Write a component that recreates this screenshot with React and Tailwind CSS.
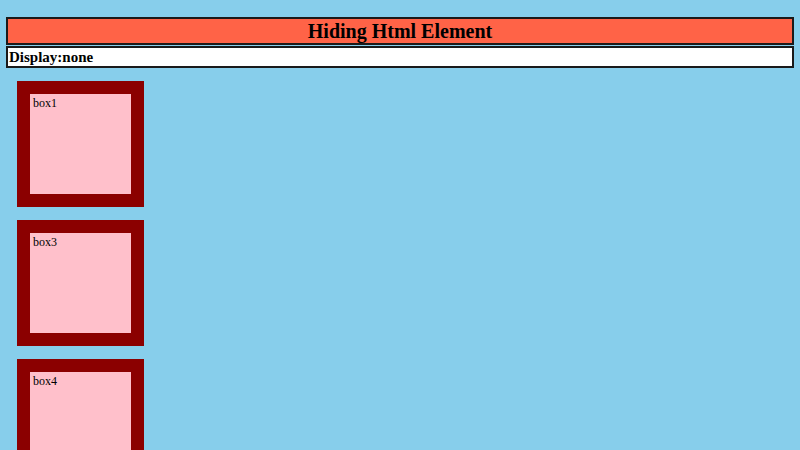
import React from 'react';

const boxes = ['box1', 'box3', 'box4'];

const Box = ({ label }) => (
  <div className="w-[127px] h-[126px] border-[13px] border-[#8b0000] bg-[#ffc0cb] px-[3px] py-[2px] text-[12px] leading-[14px] text-black">
    {label}
  </div>
);

export default function App() {
  return (
    <div className="min-h-[450px] bg-[#87ceeb] pt-[17px] px-[6px] font-['Liberation_Serif',serif] text-black">
      {/* Title bar */}
      <h1 className="h-[28px] border-2 border-[#1a1a1a] bg-[#ff6347] text-center text-[20px] font-bold leading-[24px]">
        Hiding Html Element
      </h1>
      <div className="mt-[1px] h-[22px] border-2 border-[#1a1a1a] bg-white pl-[1px] text-[15px] font-bold leading-[18px]">
        Display:none
      </div>

      {/* Boxes, box2 is hidden */}
      <div className="flex flex-col gap-[13px] pl-[11px] pt-[13px]">
        {boxes.map((b) => (
          <Box key={b} label={b} />
        ))}
      </div>
    </div>
  );
}
